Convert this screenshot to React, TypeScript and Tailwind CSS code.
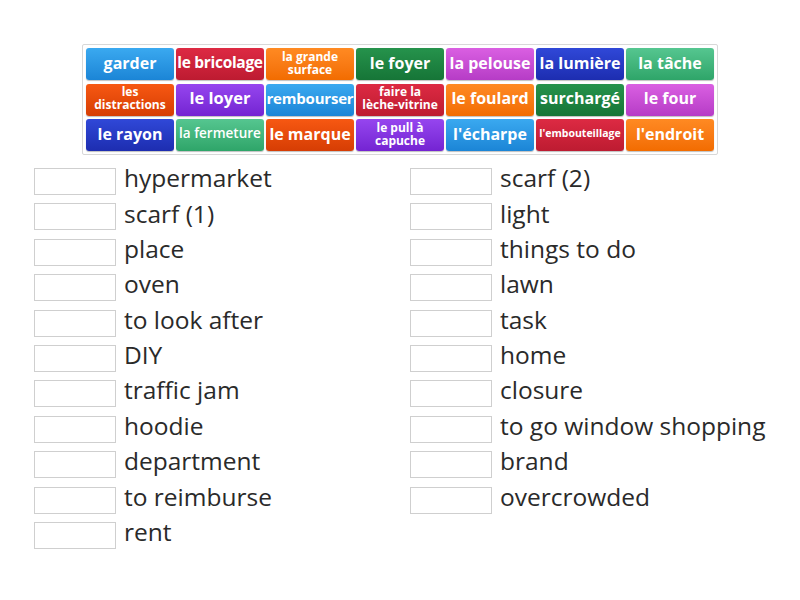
type Tile = { label: string; tone: string; size: string };

const tones: Record<string, string> = {
  blue: "bg-gradient-to-b from-[#3aa9f0] to-[#1b85d6]",
  red: "bg-gradient-to-b from-[#dd2a43] to-[#bd1b31]",
  orange: "bg-gradient-to-b from-[#ff8a22] to-[#f26c00]",
  green: "bg-gradient-to-b from-[#26934c] to-[#167537]",
  magenta: "bg-gradient-to-b from-[#da5fe2] to-[#b63cc6]",
  navy: "bg-gradient-to-b from-[#3048d8] to-[#1d2db0]",
  teal: "bg-gradient-to-b from-[#55c690] to-[#2ea569]",
  flame: "bg-gradient-to-b from-[#f75812] to-[#d63d04]",
  purple: "bg-gradient-to-b from-[#9645ef] to-[#7423d2]",
};

const twoLine = "text-[12px] leading-[13px] font-bold";

const tiles: Tile[] = [
  { label: "garder", tone: "blue", size: "text-[16px]" },
  { label: "le bricolage", tone: "red", size: "text-[15.5px] tracking-[-0.3px]" },
  { label: "la grande\nsurface", tone: "orange", size: twoLine },
  { label: "le foyer", tone: "green", size: "text-[16px]" },
  { label: "la pelouse", tone: "magenta", size: "text-[16px]" },
  { label: "la lumière", tone: "navy", size: "text-[16px]" },
  { label: "la tâche", tone: "teal", size: "text-[16px]" },
  { label: "les\ndistractions", tone: "flame", size: twoLine },
  { label: "le loyer", tone: "purple", size: "text-[16.5px]" },
  { label: "rembourser", tone: "blue", size: "text-[15px] tracking-[-0.2px]" },
  { label: "faire la\nlèche-vitrine", tone: "red", size: twoLine },
  { label: "le foulard", tone: "orange", size: "text-[16px]" },
  { label: "surchargé", tone: "green", size: "text-[16px]" },
  { label: "le four", tone: "magenta", size: "text-[16px]" },
  { label: "le rayon", tone: "navy", size: "text-[16px]" },
  { label: "la fermeture", tone: "teal", size: "text-[13.5px] font-semibold" },
  { label: "le marque", tone: "flame", size: "text-[16px]" },
  { label: "le pull à\ncapuche", tone: "purple", size: twoLine },
  { label: "l'écharpe", tone: "blue", size: "text-[16px]" },
  { label: "l'embouteillage", tone: "red", size: "text-[10.5px]" },
  { label: "l'endroit", tone: "orange", size: "text-[16px]" },
];

const left = [
  "hypermarket",
  "scarf (1)",
  "place",
  "oven",
  "to look after",
  "DIY",
  "traffic jam",
  "hoodie",
  "department",
  "to reimburse",
  "rent",
];

const right = [
  "scarf (2)",
  "light",
  "things to do",
  "lawn",
  "task",
  "home",
  "closure",
  "to go window shopping",
  "brand",
  "overcrowded",
];

function AnswerColumn({ items }: { items: string[] }) {
  return (
    <div className="flex w-[376px] flex-col gap-y-[8.4px]">
      {items.map((text) => (
        <div key={text} className="flex h-[27px] items-center">
          <div className="h-[27px] w-[82px] shrink-0 border border-[#cfcfcf] bg-white" />
          <span className="mb-[6px] ml-[8px] whitespace-nowrap text-[24.5px] text-[#2a2a2a]">
            {text}
          </span>
        </div>
      ))}
    </div>
  );
}

export default function App() {
  return (
    <div
      className="h-[600px] w-[800px] bg-white pt-[44px]"
      style={{ fontFamily: '"Open Sans", "Liberation Sans", sans-serif' }}
    >
      <div className="ml-[82px] grid w-[636px] grid-cols-7 gap-x-[2px] gap-y-[3.5px] rounded-[2px] border border-[#d8d8d8] p-[3px]">
        {tiles.map((tile) => (
          <div
            key={tile.label}
            className={`flex h-[32px] items-center justify-center whitespace-pre rounded-[3px] pb-[3px] text-center font-bold text-white shadow-[0_1px_1px_rgba(0,0,0,0.25)] ${tones[tile.tone]} ${tile.size}`}
          >
            {tile.label}
          </div>
        ))}
      </div>

      <div className="ml-[34px] mt-[13px] flex">
        <AnswerColumn items={left} />
        <AnswerColumn items={right} />
      </div>
    </div>
  );
}
